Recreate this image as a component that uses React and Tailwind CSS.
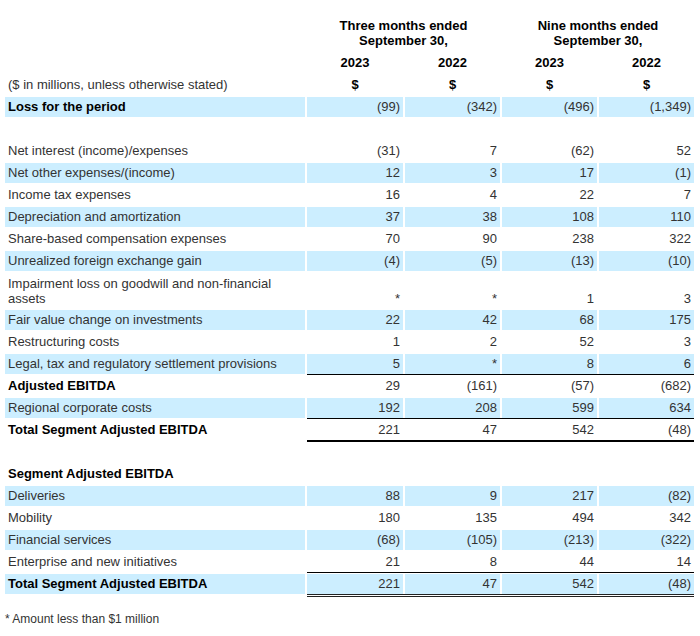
import React from "react";

const rows = [
  { label: "Loss for the period", bold: true, band: true, v: ["(99)", "(342)", "(496)", "(1,349)"] },
  { blank: true },
  { label: "Net interest (income)/expenses", v: ["(31)", "7", "(62)", "52"] },
  { label: "Net other expenses/(income)", band: true, v: ["12", "3", "17", "(1)"] },
  { label: "Income tax expenses", v: ["16", "4", "22", "7"] },
  { label: "Depreciation and amortization", band: true, v: ["37", "38", "108", "110"] },
  { label: "Share-based compensation expenses", v: ["70", "90", "238", "322"] },
  { label: "Unrealized foreign exchange gain", band: true, v: ["(4)", "(5)", "(13)", "(10)"] },
  { label: "Impairment loss on goodwill and non-financial assets", tall: true, v: ["*", "*", "1", "3"] },
  { label: "Fair value change on investments", band: true, v: ["22", "42", "68", "175"] },
  { label: "Restructuring costs", v: ["1", "2", "52", "3"] },
  { label: "Legal, tax and regulatory settlement provisions", band: true, line: "single", v: ["5", "*", "8", "6"] },
  { label: "Adjusted EBITDA", bold: true, v: ["29", "(161)", "(57)", "(682)"] },
  { label: "Regional corporate costs", band: true, line: "single", v: ["192", "208", "599", "634"] },
  { label: "Total Segment Adjusted EBITDA", bold: true, line: "thick", v: ["221", "47", "542", "(48)"] },
  { blank: true },
  { label: "Segment Adjusted EBITDA", bold: true, v: null },
  { label: "Deliveries", band: true, v: ["88", "9", "217", "(82)"] },
  { label: "Mobility", v: ["180", "135", "494", "342"] },
  { label: "Financial services", band: true, v: ["(68)", "(105)", "(213)", "(322)"] },
  { label: "Enterprise and new initiatives", line: "single", v: ["21", "8", "44", "14"] },
  { label: "Total Segment Adjusted EBITDA", bold: true, band: true, line: "double", v: ["221", "47", "542", "(48)"] },
];

const colW = ["w-[96px]", "w-[95px]", "w-[95px]", "w-[95px]"];

function Row({ r }) {
  if (r.blank) return <div className="h-[20px]" />;
  const bg = r.band ? "bg-[#cceeff]" : "";
  const rowH = r.tall ? "h-[35px]" : "h-[20px]";
  let dataCls = "flex gap-[2px] items-stretch ";
  if (r.line === "single") dataCls += "h-[21px] border-b border-black";
  else if (r.line === "thick") dataCls += "h-[22px] border-b-2 border-black";
  else if (r.line === "double") dataCls += "h-[23px] border-b-[3px] border-double border-[#222]";
  else dataCls += r.tall ? "h-[35px]" : "h-[20px]";
  return (
    <div className={`flex items-start gap-[2px] ${rowH}`}>
      <div
        className={`w-[300px] ${rowH} ${bg} pl-[3px] pr-[4px] ${
          r.tall ? "pt-[3px] leading-[15px]" : "leading-[20px]"
        } ${r.bold ? "font-bold text-black" : "text-[#333]"}`}
      >
        {r.label}
      </div>
      {r.v && (
        <div className={dataCls}>
          {r.v.map((x, i) => (
            <div
              key={i}
              className={`${colW[i]} ${bg} pr-[3px] text-right text-[#333] flex justify-end ${
                r.tall ? "items-end pb-[2px] leading-[15px]" : "items-center leading-[20px]"
              }`}
            >
              {x}
            </div>
          ))}
        </div>
      )}
    </div>
  );
}

export default function App() {
  return (
    <div
      className="w-[700px] h-[636px] bg-white pl-[5px] pt-[1px] text-[13px] overflow-hidden"
      style={{ fontFamily: '"Liberation Sans", Arial, sans-serif' }}
    >
      <div className="flex flex-col gap-[2px]">
        <div className="flex gap-[2px] h-[50px] pt-[17px] font-bold text-black leading-[15px]">
          <div className="w-[300px]" />
          <div className="w-[193px] text-center">
            Three months ended
            <br />
            September 30,
          </div>
          <div className="w-[192px] text-center">
            Nine months ended
            <br />
            September 30,
          </div>
        </div>
        <div className="flex gap-[2px] h-[20px] leading-[20px] font-bold text-black">
          <div className="w-[300px]" />
          {["2023", "2022", "2023", "2022"].map((y, i) => (
            <div key={i} className={`${colW[i]} text-center`}>
              {y}
            </div>
          ))}
        </div>
        <div className="flex gap-[2px] h-[20px] leading-[20px]">
          <div className="w-[300px] pl-[3px] text-[#333]">($ in millions, unless otherwise stated)</div>
          {[0, 1, 2, 3].map((i) => (
            <div key={i} className={`${colW[i]} text-center font-bold text-black`}>
              $
            </div>
          ))}
        </div>
        {rows.map((r, i) => (
          <Row key={i} r={r} />
        ))}
      </div>
      <div className="mt-[18px] text-[12px] leading-[15px] text-[#333]">* Amount less than $1 million</div>
    </div>
  );
}
